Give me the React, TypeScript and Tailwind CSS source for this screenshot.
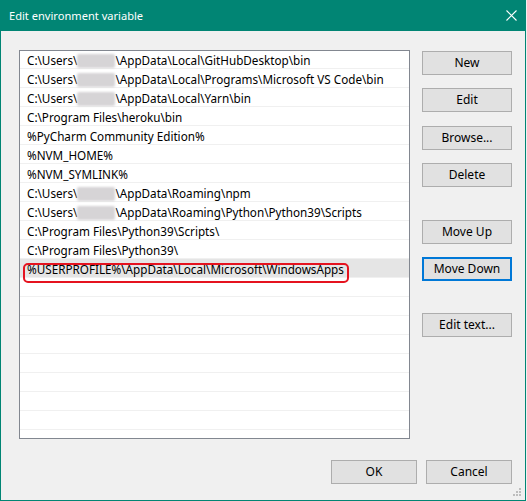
import React from 'react';

type Entry = { pre?: string; post: string; masked?: boolean };

const ENTRIES: Entry[] = [
  { pre: 'C:\\Users\\', masked: true, post: '\\AppData\\Local\\GitHubDesktop\\bin' },
  { pre: 'C:\\Users\\', masked: true, post: '\\AppData\\Local\\Programs\\Microsoft VS Code\\bin' },
  { pre: 'C:\\Users\\', masked: true, post: '\\AppData\\Local\\Yarn\\bin' },
  { post: 'C:\\Program Files\\heroku\\bin' },
  { post: '%PyCharm Community Edition%' },
  { post: '%NVM_HOME%' },
  { post: '%NVM_SYMLINK%' },
  { pre: 'C:\\Users\\', masked: true, post: '\\AppData\\Roaming\\npm' },
  { pre: 'C:\\Users\\', masked: true, post: '\\AppData\\Roaming\\Python\\Python39\\Scripts' },
  { post: 'C:\\Program Files\\Python39\\Scripts\\' },
  { post: 'C:\\Program Files\\Python39\\' },
  { post: '%USERPROFILE%\\AppData\\Local\\Microsoft\\WindowsApps' },
];

const SELECTED = 11;
const EMPTY_ROWS = 10;

const font = { fontFamily: '"Noto Sans", "Open Sans", Arial, sans-serif' };

const Button: React.FC<{ label: string; className?: string; focused?: boolean }> = ({ label, className = '', focused }) => (
  <button
    className={
      'h-[24px] bg-[#e1e1e1] text-[12px] text-black flex items-center justify-center ' +
      (focused ? 'border-2 border-[#0078d7] ' : 'border border-[#adadad] ') +
      className
    }
  >
    {label}
  </button>
);

export default function App() {
  return (
    <div className="w-[527px] h-[501px] bg-[#f0f0f0] select-none" style={font}>
      <div className="w-[526px] h-[501px] flex flex-col border-x border-b border-[#018574]">
        {/* Title bar */}
        <div className="h-[31px] -mx-px bg-[#018574] flex items-center justify-between pl-[9px] pr-[9px] text-white">
          <span className="text-[11.1px] leading-none">Edit environment variable</span>
          <svg width="11" height="11" viewBox="0 0 11 11">
            <path d="M0.5 0.5 L10.5 10.5 M10.5 0.5 L0.5 10.5" stroke="white" strokeWidth="1.1" fill="none" />
          </svg>
        </div>

        <div className="flex-1 bg-[#f0f0f0] relative">
          <div className="flex pl-[18px] pt-[19px]">
            {/* List */}
            <div className="w-[391px] h-[389px] border border-[#828790] bg-white overflow-hidden">
              <div className="-mt-px">
                {ENTRIES.map((e, i) => (
                  <div
                    key={i}
                    className={
                      'relative h-[19px] border-b border-[#f0f0f0] pl-[7px] pt-[3px] flex items-center text-[11.7px] text-black whitespace-nowrap ' +
                      (i === SELECTED ? 'bg-[#e5e5e5]' : '')
                    }
                  >
                    {e.pre}
                    {e.masked && (
                      <span className="inline-block w-[38px] h-[14px] bg-[#d6d4d6] blur-[1px] rounded-[2px]" />
                    )}
                    {e.post}
                    {i === SELECTED && (
                      <span className="absolute left-[3px] top-[4px] w-[326px] h-[20px] border-2 border-[#e5131f] rounded-[5px]" />
                    )}
                  </div>
                ))}
                {Array.from({ length: EMPTY_ROWS }).map((_, i) => (
                  <div key={'e' + i} className="h-[19px] border-b border-[#f0f0f0]" />
                ))}
              </div>
            </div>

            {/* Side buttons */}
            <div className="flex flex-col ml-[12px] pt-px w-[90px]">
              <Button label="New" />
              <Button label="Edit" className="mt-[13px]" />
              <Button label="Browse..." className="mt-[14px]" />
              <Button label="Delete" className="mt-[13px]" />
              <Button label="Move Up" className="mt-[33px]" />
              <Button label="Move Down" className="mt-[13px]" focused />
              <Button label="Edit text..." className="mt-[32px]" />
            </div>
          </div>

          {/* Bottom buttons */}
          <div className="flex justify-end gap-[9px] pr-[13px] mt-[21px]">
            <Button label="OK" className="w-[86px]" />
            <Button label="Cancel" className="w-[86px]" />
          </div>

          {/* Resize grip */}
          <svg width="9" height="9" viewBox="0 0 9 9" className="absolute right-[3px] bottom-[3px]">
            <rect x="6" y="0" width="2" height="2" fill="#bdbdbd" />
            <rect x="3" y="3" width="2" height="2" fill="#bdbdbd" />
            <rect x="6" y="3" width="2" height="2" fill="#bdbdbd" />
            <rect x="0" y="6" width="2" height="2" fill="#bdbdbd" />
            <rect x="3" y="6" width="2" height="2" fill="#bdbdbd" />
            <rect x="6" y="6" width="2" height="2" fill="#bdbdbd" />
          </svg>
        </div>
      </div>
    </div>
  );
}
